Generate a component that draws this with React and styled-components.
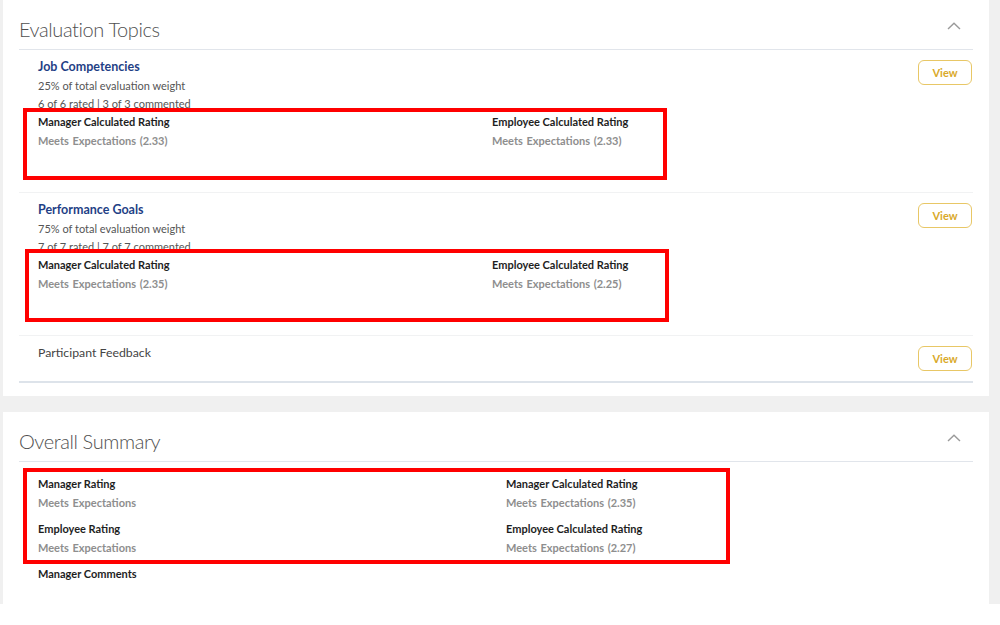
import React from "react";
import styled, { createGlobalStyle } from "styled-components";

const Global = createGlobalStyle`
  html, body { margin: 0; padding: 0; background: #ffffff; }
  body { font-family: "Lato", "Liberation Sans", sans-serif; color: #333; }
`;

const Page = styled.div`
  position: relative;
  width: 1000px;
  box-sizing: border-box;
  background: #f0f0f0;
  padding: 0 11px 0 3px;
  display: flex;
  flex-direction: column;
  gap: 16px;
`;

const Card = styled.section`
  background: #ffffff;
  padding: 0 16px ${(p) => p.$bottom || 0}px;
`;

const Header = styled.div`
  display: flex;
  align-items: center;
  justify-content: space-between;
  height: 50px;
  border-bottom: 1px solid #e1e5eb;
  padding-top: 8px;
  box-sizing: border-box;
`;

const Title = styled.h2`
  margin: 0;
  font-size: 20px;
  letter-spacing: -0.4px;
  font-weight: 300;
  color: #505050;
  line-height: 30px;
`;

const Chevron = styled.svg`
  width: 14px;
  height: 8px;
  margin-right: 12px;
  margin-bottom: 5px;
`;

const TopicRow = styled.div`
  display: flex;
  justify-content: space-between;
  align-items: flex-start;
  padding: 8px 1px 0 19px;
  min-height: ${(p) => p.$min || 0}px;
  box-sizing: border-box;
  border-bottom: ${(p) => (p.$last ? "2px solid #dde3ea" : "1px solid #f1f2f3")};
`;

const TopicBody = styled.div`
  flex: 1;
  display: flex;
  flex-direction: column;
`;

const TopicName = styled.a`
  font-size: 12.5px;
  font-weight: 700;
  color: #1f3f86;
  line-height: 18px;
  text-decoration: none;
`;

const Meta = styled.div`
  font-size: 11px;
  color: #555;
  line-height: ${(p) => p.$lh || 18}px;
`;

const Plain = styled.div`
  font-size: 12.3px;
  color: #444;
  line-height: 18px;
`;

const Ratings = styled.div`
  display: grid;
  grid-template-columns: ${(p) => p.$col}px 1fr;
  row-gap: 8px;
`;

const Rating = styled.div`
  display: flex;
  flex-direction: column;
`;

const Label = styled.div`
  font-size: 11px;
  font-weight: 700;
  color: #1e1e1e;
  line-height: 18px;
`;

const Value = styled.div`
  font-size: 11px;
  font-weight: 700;
  color: #8e8e8e;
  line-height: 19px;
  word-spacing: 1px;
`;

const ViewButton = styled.button`
  margin-top: 2px;
  width: 54px;
  height: 25px;
  box-sizing: border-box;
  border: 1px solid #e8c766;
  border-radius: 6px;
  background: #fff;
  color: #d9a92a;
  font-family: inherit;
  font-size: 11px;
  font-weight: 700;
  padding: 0;
`;

const SummaryBody = styled.div`
  padding: 13px 0 21px 19px;
  display: flex;
  flex-direction: column;
  gap: 8px;
`;

const Highlight = styled.div`
  position: absolute;
  left: ${(p) => p.$x}px;
  top: ${(p) => p.$y}px;
  width: ${(p) => p.$w}px;
  height: ${(p) => p.$h}px;
  box-sizing: border-box;
  border: 4px solid #ff0000;
  pointer-events: none;
`;

const Up = () => (
  <Chevron viewBox="0 0 14 8">
    <path d="M1 7 L7 1.2 L13 7" fill="none" stroke="#9a9a9a" strokeWidth="1.4" />
  </Chevron>
);

const topics = [
  {
    name: "Job Competencies",
    weight: "25% of total evaluation weight",
    rated: "6 of 6 rated | 3 of 3 commented",
    mgr: "Meets Expectations (2.33)",
    emp: "Meets Expectations (2.33)",
  },
  {
    name: "Performance Goals",
    weight: "75% of total evaluation weight",
    rated: "7 of 7 rated | 7 of 7 commented",
    mgr: "Meets Expectations (2.35)",
    emp: "Meets Expectations (2.25)",
  },
];

export default function App() {
  return (
    <>
      <Global />
      <Page>
        <Card $bottom={13}>
          <Header>
            <Title>Evaluation Topics</Title>
            <Up />
          </Header>
          {topics.map((t) => (
            <TopicRow key={t.name} $min={143}>
              <TopicBody>
                <TopicName>{t.name}</TopicName>
                <Meta $lh={19}>{t.weight}</Meta>
                <Meta>{t.rated}</Meta>
                <Ratings $col={454}>
                  <Rating>
                    <Label>Manager Calculated Rating</Label>
                    <Value>{t.mgr}</Value>
                  </Rating>
                  <Rating>
                    <Label>Employee Calculated Rating</Label>
                    <Value>{t.emp}</Value>
                  </Rating>
                </Ratings>
              </TopicBody>
              <ViewButton>View</ViewButton>
            </TopicRow>
          ))}
          <TopicRow $min={47} $last>
            <TopicBody>
              <Plain>Participant Feedback</Plain>
            </TopicBody>
            <ViewButton>View</ViewButton>
          </TopicRow>
        </Card>
        <Card>
          <Header>
            <Title>Overall Summary</Title>
            <Up />
          </Header>
          <SummaryBody>
            <Ratings $col={468}>
              <Rating>
                <Label>Manager Rating</Label>
                <Value>Meets Expectations</Value>
              </Rating>
              <Rating>
                <Label>Manager Calculated Rating</Label>
                <Value>Meets Expectations (2.35)</Value>
              </Rating>
              <Rating>
                <Label>Employee Rating</Label>
                <Value>Meets Expectations</Value>
              </Rating>
              <Rating>
                <Label>Employee Calculated Rating</Label>
                <Value>Meets Expectations (2.27)</Value>
              </Rating>
            </Ratings>
            <Label>Manager Comments</Label>
          </SummaryBody>
        </Card>
        <Highlight $x={23} $y={108} $w={644} $h={72} />
        <Highlight $x={25} $y={249} $w={644} $h={73} />
        <Highlight $x={23} $y={468} $w={707} $h={96} />
      </Page>
    </>
  );
}
